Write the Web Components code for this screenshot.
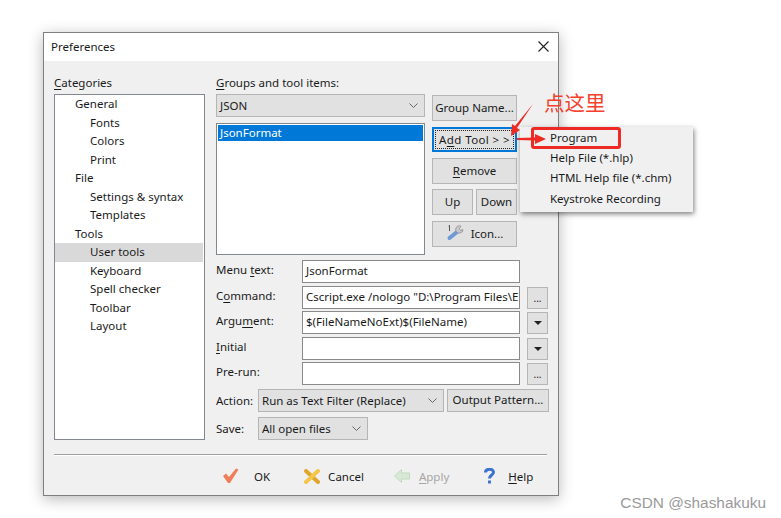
<!DOCTYPE html>
<html>
<head>
<meta charset="utf-8">
<title>Preferences</title>
<style>
  html, body { margin: 0; padding: 0; background: white; }
  body { font-family: "Noto Sans", "Noto Sans CJK SC", sans-serif; font-size: 11.5px; color: #1a1a1a; }
  u { text-underline-offset: 2px; }
</style>
</head>
<body>
<script>
class PrefScreen extends HTMLElement {
  constructor() {
    super();
    this.attachShadow({ mode: 'open' });
    this.shadowRoot.innerHTML = `
      <style>
        :host { display: block; position: relative; width: 781px; height: 518px; overflow: hidden; background: white; padding: 32px 0 0 43px; box-sizing: border-box; }
        .mark { display: flex; justify-content: flex-end; margin: 0 15px 0 0; height: 14px; align-items: center; font: 15.4px "Liberation Sans", sans-serif; color: #9a9a9a; }
      </style>
      <slot></slot>
      <div class="mark"><slot name="mark"></slot></div>
    `;
  }
}
customElements.define('pref-screen', PrefScreen);

class PrefDialog extends HTMLElement {
  constructor() {
    super();
    this.attachShadow({ mode: 'open' });
    this.shadowRoot.innerHTML = `
      <style>
        :host { display: block; width: 516px; height: 464px; box-sizing: border-box; background: #f0f0f0; border: 1px solid #7f7f7f; box-shadow: 0 3px 14px rgba(0,0,0,.28); }
        .title { height: 28px; background: white; display: flex; align-items: center; justify-content: space-between; padding: 0 9px 2px 7px; box-sizing: border-box; }
        .body { display: grid; grid-template-columns: 151px 333px; column-gap: 11px; padding: 14px 0 0 10px; }
        .sep { height: 1px; background: #a0a0a0; margin: 14px 11px 0 10px; border-bottom: 1px solid #fff; }
      </style>
      <div class="title"><slot name="title"></slot>
        <svg width="11" height="11" viewBox="0 0 11 11"><path d="M0.500 0.500 L10.500 10.500 M10.500 0.500 L0.500 10.500" stroke="#222" stroke-width="1.100" fill="none"/></svg>
      </div>
      <div class="body"><slot name="left"></slot><slot name="right"></slot></div>
      <div class="sep"></div>
      <slot name="foot"></slot>
    `;
  }
}
customElements.define('pref-dialog', PrefDialog);

class TreePanel extends HTMLElement {
  constructor() {
    super();
    this.attachShadow({ mode: 'open' });
    this.shadowRoot.innerHTML = `
      <style>
        :host { display: block; }
        .cap { height: 16px; line-height: 16px; margin-bottom: 3px; }
        .box { height: 346px; box-sizing: border-box; background: white; border: 1px solid #828790; padding: 0 1px 0 0; }
      </style>
      <div class="cap"><slot name="cap"></slot></div>
      <div class="box"><slot></slot></div>
    `;
  }
}
customElements.define('tree-panel', TreePanel);

class TreeItem extends HTMLElement {
  constructor() {
    super();
    this.attachShadow({ mode: 'open' });
    this.shadowRoot.innerHTML = `
      <style>
        :host { display: block; height: 18.5px; line-height: 18.5px; padding-left: 20px; white-space: nowrap; }
        :host([level="2"]) { padding-left: 35px; }
        :host([selected]) { background: #d9d9d9; }
      </style>
      <slot></slot>
    `;
  }
}
customElements.define('tree-item', TreeItem);

class UiButton extends HTMLElement {
  constructor() {
    super();
    this.attachShadow({ mode: 'open' });
    this.shadowRoot.innerHTML = `
      <style>
        :host { display: flex; align-items: center; justify-content: center; box-sizing: border-box; height: 26px; padding-bottom: 2px; background: #e1e1e1; border: 1px solid #b5b5b5; white-space: nowrap; }
        :host([focused]) { border: 2px solid #0078d7; outline: 1px dotted #222; outline-offset: -4px; height: 25px; letter-spacing: 0.4px; padding-bottom: 1px; }
      </style>
      <slot></slot>
    `;
  }
}
customElements.define('ui-button', UiButton);

class ComboBox extends HTMLElement {
  constructor() {
    super();
    this.attachShadow({ mode: 'open' });
    this.shadowRoot.innerHTML = `
      <style>
        :host { display: flex; align-items: center; justify-content: space-between; box-sizing: border-box; height: 23px; background: #e1e1e1; border: 1px solid #b5b5b5; padding: 0 6px 1px 3px; white-space: nowrap; }
      </style>
      <slot></slot>
      <svg width="9" height="5" viewBox="0 0 9 5"><path d="M0.500 0.500 L4.500 4.500 L8.500 0.500" stroke="#666" stroke-width="1" fill="none"/></svg>
    `;
  }
}
customElements.define('combo-box', ComboBox);

class TextInput extends HTMLElement {
  constructor() {
    super();
    this.attachShadow({ mode: 'open' });
    this.shadowRoot.innerHTML = `
      <style>
        :host { display: flex; align-items: center; box-sizing: border-box; height: 23px; background: white; border: 1px solid #8a8a8a; padding: 0 0 2px 3px; white-space: nowrap; overflow: hidden; }
      </style>
      <slot></slot>
    `;
  }
}
customElements.define('text-input', TextInput);

class SideButton extends HTMLElement {
  constructor() {
    super();
    this.attachShadow({ mode: 'open' });
    const mark = this.getAttribute('kind') === 'drop'
      ? '<svg width="8" height="4" viewBox="0 0 8 4"><path d="M0 0 H8 L4 4 Z" fill="#222"/></svg>'
      : '<span>...</span>';
    this.shadowRoot.innerHTML = `
      <style>
        :host { display: flex; align-items: center; justify-content: center; box-sizing: border-box; width: 21px; height: 22px; margin-top: 1px; background: #e1e1e1; border: 1px solid #b5b5b5; font-size: 10px; }
      </style>
      ${mark}
    `;
  }
}
customElements.define('side-button', SideButton);

class FormRow extends HTMLElement {
  constructor() {
    super();
    this.attachShadow({ mode: 'open' });
    this.shadowRoot.innerHTML = `
      <style>
        :host { display: grid; grid-template-columns: 86px 218px 21px; column-gap: 0; align-items: start; height: 23px; }
        .lab { line-height: 20px; white-space: nowrap; }
        .side { margin-left: 7px; }
      </style>
      <div class="lab"><slot name="label"></slot></div>
      <slot name="field"></slot>
      <div class="side"><slot name="side"></slot></div>
    `;
  }
}
customElements.define('form-row', FormRow);

class RightPanel extends HTMLElement {
  constructor() {
    super();
    this.attachShadow({ mode: 'open' });
    this.shadowRoot.innerHTML = `
      <style>
        :host { display: block; }
        .cap { height: 16px; line-height: 16px; margin-bottom: 3px; }
        .top { display: grid; grid-template-columns: 209px 85px; column-gap: 7px; height: 161px; }
        .lists { display: flex; flex-direction: column; gap: 6px; }
        .btns { display: flex; flex-direction: column; padding-top: 1px; gap: 6px; }
        .list { height: 132px; box-sizing: border-box; background: white; border: 1px solid #828790; padding: 1px; }
        .rows { display: flex; flex-direction: column; gap: 2.5px; margin-top: 5px; }
        .action { display: grid; grid-template-columns: 39px 186px 102px; column-gap: 3px; align-items: center; margin-top: 4px; }
        .save { display: grid; grid-template-columns: 39px 110px; column-gap: 3px; align-items: center; margin-top: 5px; }
      </style>
      <div class="cap"><slot name="cap"></slot></div>
      <div class="top">
        <div class="lists"><slot name="group"></slot><div class="list"><slot name="items"></slot></div></div>
        <div class="btns"><slot name="buttons"></slot></div>
      </div>
      <div class="rows"><slot name="rows"></slot></div>
      <div class="action"><slot name="action"></slot></div>
      <div class="save"><slot name="save"></slot></div>
    `;
  }
}
customElements.define('right-panel', RightPanel);

class FootBar extends HTMLElement {
  constructor() {
    super();
    this.attachShadow({ mode: 'open' });
    this.shadowRoot.innerHTML = `
      <style>
        :host { display: flex; align-items: center; height: 18px; padding: 11px 0 0 179px; }
      </style>
      <slot></slot>
    `;
  }
}
customElements.define('foot-bar', FootBar);

class FootButton extends HTMLElement {
  constructor() {
    super();
    this.attachShadow({ mode: 'open' });
    this.shadowRoot.innerHTML = `
      <style>
        :host { display: flex; align-items: center; gap: var(--icon-gap, 8px); margin-right: var(--after, 30px); white-space: nowrap; }
        :host([disabled]) { color: #a6a6a6; }
      </style>
      <slot name="icon"></slot><slot></slot>
    `;
  }
}
customElements.define('foot-button', FootButton);

class PopupMenu extends HTMLElement {
  constructor() {
    super();
    this.attachShadow({ mode: 'open' });
    this.shadowRoot.innerHTML = `
      <style>
        :host { display: flex; flex-direction: column; position: absolute; left: 520px; top: 127px; width: 173px; height: 85px; box-sizing: border-box; padding: 1px 0 0 30px; background: #f0f0f0; box-shadow: 1px 2px 5px rgba(0,0,0,.5); }
        ::slotted(div) { height: 20.2px; line-height: 20.2px; }
      </style>
      <slot></slot>
    `;
  }
}
customElements.define('popup-menu', PopupMenu);

class CallOut extends HTMLElement {
  constructor() {
    super();
    this.attachShadow({ mode: 'open' });
    this.shadowRoot.innerHTML = `
      <style>
        :host { display: block; position: absolute; inset: 0; pointer-events: none; }
        .box { position: absolute; left: 531px; top: 127px; width: 90px; height: 22px; box-sizing: border-box; border: 3px solid #ee2a24; border-radius: 3px; }
        .say { position: absolute; left: 544px; top: 88px; font: 20.5px/28px "Noto Sans CJK SC", sans-serif; color: #f5402c; }
        svg { position: absolute; left: 0; top: 0; }
      </style>
      <div class="say"><slot></slot></div>
      <div class="box"></div>
      <svg width="781" height="518" viewBox="0 0 781 518">
        <path d="M533 104 L517 128 L520 130 L511 136 L512 124 L515 126 Z" fill="#ee2a24"/>
        <path d="M517 138 L535 137.500 L535 134 L546 139 L535 144 L535 140.500 L517 140 Z" fill="#ee2a24"/>
      </svg>
    `;
  }
}
customElements.define('call-out', CallOut);

const icons = {
  check: '<svg slot="icon" width="16" height="16" viewBox="0 0 16 16"><path d="M0 8 L3 5.500 L6 9 L13 0.500 L15.500 1.500 L7 15 L5 15 Z" fill="#ee7f56"/></svg>',
  cross: '<svg slot="icon" width="16" height="15" viewBox="0 0 16 15"><path d="M2 2 L14 13" stroke="#dfa62b" stroke-width="4" stroke-linecap="round"/><path d="M14 2 L2 13" stroke="#f3c54c" stroke-width="4" stroke-linecap="round"/></svg>',
  back: '<svg slot="icon" width="16" height="14" viewBox="0 0 16 14"><path d="M7.500 0.500 L0.500 7 L7.500 13.500 L7.500 10 L15.500 10 L15.500 4 L7.500 4 Z" fill="#d7e8d4" stroke="#c3d9c1" stroke-width="1"/></svg>',
  help: '<svg slot="icon" width="11" height="16" viewBox="0 0 11 16"><path d="M1.500 4.500 C1.500 0.500 9.500 0 9.500 4.200 C9.500 7 5.500 7 5.500 10.500" stroke="#3c72d0" stroke-width="3" fill="none"/><rect x="4" y="12.500" width="3" height="3" fill="#3c72d0"/></svg>',
  wrench: '<svg width="18" height="18" viewBox="0 0 18 18" style="margin-right:7px"><path d="M3.500 14 L11 8" stroke="#6f9ad8" stroke-width="4" stroke-linecap="round"/><path d="M10 4 A3.500 3.500 0 0 0 14 9 A3.500 3.500 0 0 0 17 5.500 L14.500 6.500 L13.500 4.500 L15 2.200 A3.500 3.500 0 0 0 10 4 Z" fill="#c9c9c9" stroke="#8a8a8a" stroke-width=".7"/><path d="M2.500 2 L3.500 1.500 L3.500 7" stroke="#444" stroke-width=".9" fill="none"/></svg>'
};

document.body.innerHTML = `
<pref-screen>
  <pref-dialog>
    <span slot="title">Preferences</span>
    <tree-panel slot="left">
      <span slot="cap"><u>C</u>ategories</span>
      <tree-item>General</tree-item>
      <tree-item level="2">Fonts</tree-item>
      <tree-item level="2">Colors</tree-item>
      <tree-item level="2">Print</tree-item>
      <tree-item>File</tree-item>
      <tree-item level="2">Settings &amp; syntax</tree-item>
      <tree-item level="2">Templates</tree-item>
      <tree-item>Tools</tree-item>
      <tree-item level="2" selected>User tools</tree-item>
      <tree-item level="2">Keyboard</tree-item>
      <tree-item level="2">Spell checker</tree-item>
      <tree-item level="2">Toolbar</tree-item>
      <tree-item level="2">Layout</tree-item>
    </tree-panel>
    <right-panel slot="right">
      <span slot="cap"><u>G</u>roups and tool items:</span>
      <combo-box slot="group">JSON</combo-box>
      <div slot="items" style="height:16px;line-height:16px;background:#0078d7;color:#fff;padding-left:2px">JsonFormat</div>
      <ui-button slot="buttons">Group Name...</ui-button>
      <ui-button slot="buttons" focused>A<u>d</u>d Tool &gt; &gt;</ui-button>
      <ui-button slot="buttons"><u>R</u>emove</ui-button>
      <div slot="buttons" style="display:grid;grid-template-columns:41px 41px;column-gap:3px;margin-top:-1px"><ui-button>Up</ui-button><ui-button>Down</ui-button></div>
      <ui-button slot="buttons">${icons.wrench}Icon...</ui-button>
      <form-row slot="rows"><span slot="label">Menu <u>t</u>ext:</span><text-input slot="field">JsonFormat</text-input></form-row>
      <form-row slot="rows"><span slot="label">C<u>o</u>mmand:</span><text-input slot="field">Cscript.exe /nologo "D:\\Program Files\\E</text-input><side-button slot="side"></side-button></form-row>
      <form-row slot="rows"><span slot="label">Argu<u>m</u>ent:</span><text-input slot="field">$(FileNameNoExt)$(FileName)</text-input><side-button slot="side" kind="drop"></side-button></form-row>
      <form-row slot="rows"><span slot="label"><u>I</u>nitial</span><text-input slot="field"></text-input><side-button slot="side" kind="drop"></side-button></form-row>
      <form-row slot="rows"><span slot="label">Pre-run:</span><text-input slot="field"></text-input><side-button slot="side"></side-button></form-row>
      <span slot="action">Action:</span>
      <combo-box slot="action">Run as Text Filter (Replace)</combo-box>
      <ui-button slot="action" style="height:23px">Output Pattern...</ui-button>
      <span slot="save">Save:</span>
      <combo-box slot="save">All open files</combo-box>
    </right-panel>
    <foot-bar slot="foot">
      <foot-button style="--icon-gap:15px;--after:34px">${icons.check}OK</foot-button>
      <foot-button style="--icon-gap:8px;--after:30px">${icons.cross}Cancel</foot-button>
      <foot-button style="--icon-gap:9px;--after:35px" disabled>${icons.back}<span><u>A</u>pply</span></foot-button>
      <foot-button style="--icon-gap:13px;--after:0">${icons.help}<span><u>H</u>elp</span></foot-button>
    </foot-bar>
  </pref-dialog>
  <popup-menu>
    <div>Program</div>
    <div>Help File (*.hlp)</div>
    <div>HTML Help file (*.chm)</div>
    <div>Keystroke Recording</div>
  </popup-menu>
  <call-out>点这里</call-out>
  <span slot="mark">CSDN @shashakuku</span>
</pref-screen>`;
</script>
</body>
</html>
